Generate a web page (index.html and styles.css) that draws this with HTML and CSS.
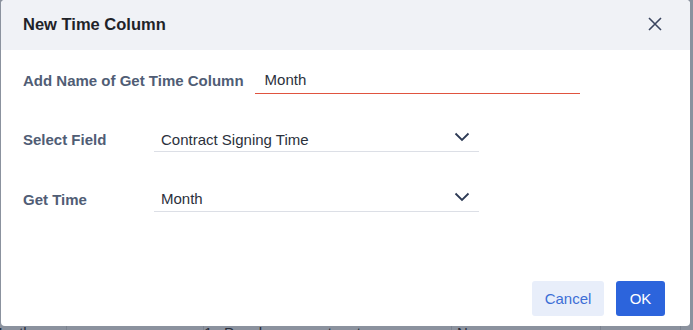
FILE: index.html
```html
<!DOCTYPE html>
<html>
<head>
<meta charset="utf-8">
<link rel="stylesheet" href="styles.css">
</head>
<body>
<div class="behind">
  <div class="cell c1">Month</div>
  <div class="cell c2"></div>
  <div class="cell c3">1</div>
  <div class="cell c4">Purchase contract</div>
  <div class="cell c5">No</div>
  <div class="cell c6"></div>
</div>
<div class="dialog">
  <div class="header">
    <span class="title">New Time Column</span>
    <svg class="close" width="16" height="16" viewBox="0 0 16 16"><path d="M2 2 L14 14 M14 2 L2 14" stroke="#3b4660" stroke-width="1.6" fill="none"/></svg>
  </div>
  <div class="body">
    <div class="row row1">
      <span class="label first">Add Name of Get Time Column</span>
      <div class="input">Month</div>
    </div>
    <div class="row row2">
      <span class="label fixed">Select Field</span>
      <div class="select"><span>Contract Signing Time</span>
        <svg width="16" height="10" viewBox="0 0 16 10"><path d="M1.5 1.5 L8 8 L14.5 1.5" stroke="#2d3a55" stroke-width="1.8" fill="none"/></svg>
      </div>
    </div>
    <div class="row row3">
      <span class="label fixed">Get Time</span>
      <div class="select"><span>Month</span>
        <svg width="16" height="10" viewBox="0 0 16 10"><path d="M1.5 1.5 L8 8 L14.5 1.5" stroke="#2d3a55" stroke-width="1.8" fill="none"/></svg>
      </div>
    </div>
  </div>
  <div class="footer">
    <button class="btn cancel">Cancel</button>
    <button class="btn ok">OK</button>
  </div>
</div>
</body>
</html>
```
FILE: styles.css
```css
html, body {
  margin: 0;
  padding: 0;
}
* { box-sizing: border-box; }
body {
  width: 693px;
  height: 330px;
  overflow: hidden;
  background: #8b929e;
  font-family: "Liberation Sans", Arial, sans-serif;
  position: relative;
}
.behind {
  display: flex;
  padding-top: 324px;
  color: #262d3a;
  font-size: 15px;
  line-height: 18px;
}
.cell {
  height: 18px;
  border-right: 1px solid #7c8390;
  white-space: nowrap;
  overflow: hidden;
}
.c1 { width: 67px; text-indent: -10px; }
.c2 { width: 137px; }
.c3 { width: 12px; border-right: none; }
.c4 { width: 236px; padding-left: 8px; letter-spacing: 1px; }
.c5 { width: 149px; padding-left: 5px; }
.c6 { width: 80px; }
.dialog {
  position: absolute;
  left: 1px;
  top: 0;
  width: 689px;
  height: 326px;
  background: #fff;
  border-radius: 4px;
  overflow: hidden;
  display: flex;
  flex-direction: column;
}
.header {
  height: 50px;
  background: #f0f2f6;
  display: flex;
  align-items: center;
  justify-content: space-between;
  padding: 0 27px 0 22px;
  flex-shrink: 0;
}
.title {
  font-size: 16.5px;
  font-weight: bold;
  color: #1f2329;
  margin-top: -2px;
}
.close {
  margin-top: -2px;
}
.body {
  flex: 1;
  padding-left: 22px;
}
.row {
  display: flex;
  align-items: flex-end;
}
.row1 { margin-top: 13px; }
.row2 { margin-top: 27px; }
.row3 { margin-top: 29px; }
.label {
  font-size: 15px;
  font-weight: bold;
  color: #505d75;
  line-height: 24px;
  height: 24px;
}
.row1 .label { line-height: 26px; height: 26px; }
.row3 .label { line-height: 25px; height: 25px; }
.label.first {
  margin-right: 11px;
}
.label.fixed {
  width: 131px;
}
.input {
  width: 325px;
  height: 31px;
  line-height: 30px;
  padding: 2px 0 0 10px;
  border-bottom: 1px solid #e0533f;
  font-size: 15px;
  color: #2b313c;
}
.select {
  width: 325px;
  height: 31px;
  padding: 6px 9px 0 7px;
  border-bottom: 1px solid #dcdfe6;
  display: flex;
  align-items: center;
  justify-content: space-between;
  font-size: 15px;
  color: #2b313c;
}
.row3 .select { padding-top: 5px; }
.select svg { margin-top: -4px; }
.footer {
  display: flex;
  justify-content: flex-end;
  gap: 12px;
  padding: 0 25px 10px 0;
}
.btn {
  height: 35px;
  border: none;
  border-radius: 3px;
  font-family: "Liberation Sans", Arial, sans-serif;
  font-size: 15px;
  padding: 0;
}
.cancel {
  width: 72px;
  background: #e8eefa;
  color: #3d6ed6;
}
.ok {
  width: 49px;
  background: #2c64dc;
  color: #fff;
}
```
